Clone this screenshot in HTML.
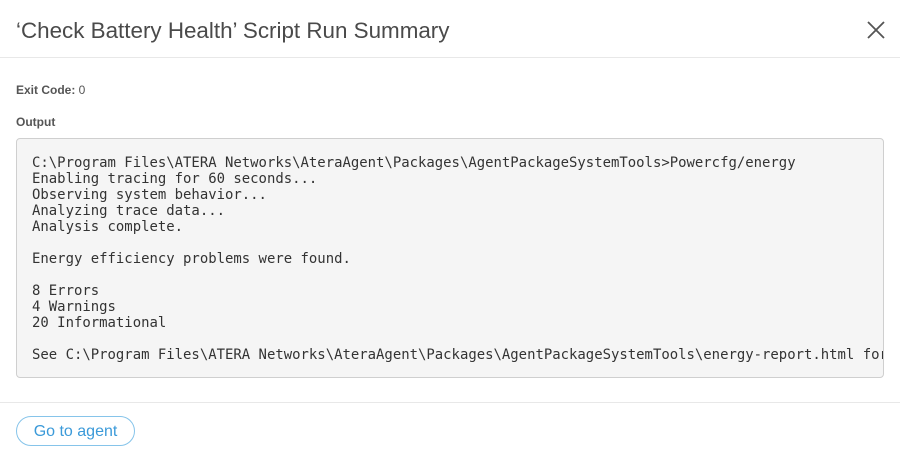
<!DOCTYPE html>
<html><head><style>
body{margin:0;width:900px;height:460px;background:#fff;font-family:"Liberation Sans",sans-serif;position:relative;overflow:hidden}
.t{position:absolute;left:16px;top:18px;font-size:22.4px;color:#4a4a4a}
.x{position:absolute;left:867px;top:21px}
.hr{position:absolute;left:0;width:900px;height:1px;background:#e8e8e8}
.l{position:absolute;left:16px;font-size:12px;color:#555;}
.box{position:absolute;left:16px;top:138px;width:866px;height:238px;background:#f5f5f5;border:1px solid #cfcfcf;border-radius:4px;overflow:hidden}
pre{margin:0;position:absolute;left:15px;top:16px;font-family:"DejaVu Sans Mono",monospace;font-size:13.95px;line-height:16px;color:#333;white-space:pre}
.b{position:absolute;left:16px;top:416px;width:117px;height:28px;border:1px solid #86c4ea;border-radius:15px;color:#3b9ad9;font-size:16px;line-height:29px;text-align:center}
</style></head><body>
<div class="t">‘Check Battery Health’ Script Run Summary</div>
<svg class="x" width="18" height="18" viewBox="0 0 18 18"><path d="M1 1L17 17M17 1L1 17" stroke="#555" stroke-width="1.8"/></svg>
<div class="hr" style="top:57px"></div>
<div class="l" style="top:83px"><b style="color:#555">Exit Code:</b> 0</div>
<div class="l" style="top:115px;font-weight:bold">Output</div>
<div class="box"><pre>C:\Program Files\ATERA Networks\AteraAgent\Packages\AgentPackageSystemTools>Powercfg/energy
Enabling tracing for 60 seconds...
Observing system behavior...
Analyzing trace data...
Analysis complete.

Energy efficiency problems were found.

8 Errors
4 Warnings
20 Informational

See C:\Program Files\ATERA Networks\AteraAgent\Packages\AgentPackageSystemTools\energy-report.html for more details.</pre></div>
<div class="hr" style="top:402px"></div>
<div class="b">Go to agent</div>
</body></html>
